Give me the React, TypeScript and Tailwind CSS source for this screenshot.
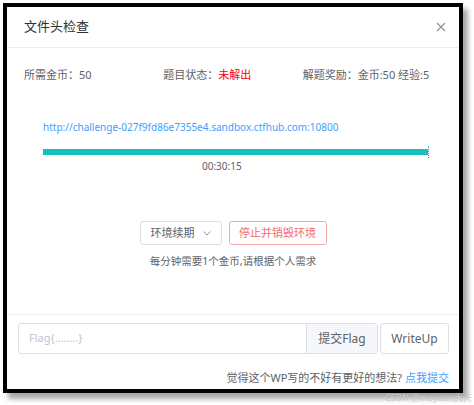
import React from "react";

const font = { fontFamily: '"Noto Sans", "Noto Sans CJK SC", sans-serif' };

function CloseIcon() {
  return (
    <svg width="10" height="10" viewBox="0 0 10 10" fill="none" stroke="#909399" strokeWidth="1.2">
      <path d="M1 1 L9 9 M9 1 L1 9" />
    </svg>
  );
}

function ChevronDown() {
  return (
    <svg width="8" height="5" viewBox="0 0 8 5" fill="none" stroke="#909399" strokeWidth="1">
      <path d="M0.5 0.5 L4 4 L7.5 0.5" />
    </svg>
  );
}

export default function App() {
  return (
    <div className="relative w-[474px] h-[405px] bg-white pl-[3px] pt-[3px]" style={font}>
      <div className="w-[460px] h-[390px] border-4 border-black bg-white shadow-[5px_6px_5px_rgba(0,0,0,0.35)] flex flex-col">
        {/* header */}
        <div className="h-[41px] shrink-0 flex items-center justify-between pl-[17px] pr-[13px] border-b border-[#ebeef5]">
          <span className="text-[13px] text-[#303133]">文件头检查</span>
          <CloseIcon />
        </div>

        {/* body */}
        <div className="h-[267px] shrink-0 border-b border-[#ebeef5] flex flex-col">
          <div className="mt-[18px] grid grid-cols-3 px-[17px] text-[11px] leading-[17px] text-[#606266]">
            <span>所需金币：50</span>
            <span>
              题目状态：<span className="text-[#f00]">未解出</span>
            </span>
            <span>解题奖励：金币:50 经验:5</span>
          </div>

          <div className="mt-[36px] pl-[36px] text-[10px] leading-[17px] text-[#409eff]">
            http://challenge-027f9fd86e7355e4.sandbox.ctfhub.com:10800
          </div>

          <div className="mt-[10px] pl-[36px] flex items-center">
            <div className="w-[385px] h-[6px] bg-[#17bfbf]" />
            <div className="w-px h-[12px] border-l border-dotted border-[#17bfbf]" />
          </div>

          <div className="mt-0 pl-[195px] text-[10px] leading-[17px] text-[#606266]">00:30:15</div>

          <div className="mt-[46px] flex justify-center gap-[7px]">
            <button className="w-[82px] h-[24px] rounded-[3px] border border-[#dcdfe6] bg-white flex items-center justify-center gap-[8px] text-[11px] text-[#606266]">
              环境续期
              <ChevronDown />
            </button>
            <button className="w-[98px] h-[24px] rounded-[3px] border border-[#f4a9a9] bg-white text-[11px] text-[#f56c6c]">
              停止并销毁环境
            </button>
          </div>

          <div className="mt-[8px] text-center text-[10.5px] leading-[17px] text-[#606266]">
            每分钟需要1个金币,请根据个人需求
          </div>
        </div>

        {/* footer */}
        <div className="pt-[8px] pl-[11px] pr-[10px] flex flex-col">
          <div className="flex items-center h-[31px]">
            <div className="flex h-full w-[360px] rounded-[3px] border border-[#dcdfe6]">
              <div className="flex-1 flex items-center pl-[10px] text-[11px] text-[#c0c4cc]">Flag{"{........}"}</div>
              <div className="w-[71px] h-full border-l border-[#dcdfe6] bg-[#f5f7fa] flex items-center justify-center text-[12px] text-[#606266]">
                提交Flag
              </div>
            </div>
            <button className="ml-[2px] w-[69px] h-full rounded-[3px] border border-[#dcdfe6] bg-white text-[12px] text-[#606266]">
              WriteUp
            </button>
          </div>
          <div className="mt-[15px] text-right text-[11px] leading-[17px] text-[#606266]">
            觉得这个WP写的不好有更好的想法? <span className="text-[#409eff]">点我提交</span>
          </div>
        </div>
      </div>
      <div className="absolute right-[2px] top-[392px] text-[9px] leading-[11px] text-[#c8c8c8] blur-[0.3px]">
        CSDN @moyuan大天
      </div>
    </div>
  );
}
